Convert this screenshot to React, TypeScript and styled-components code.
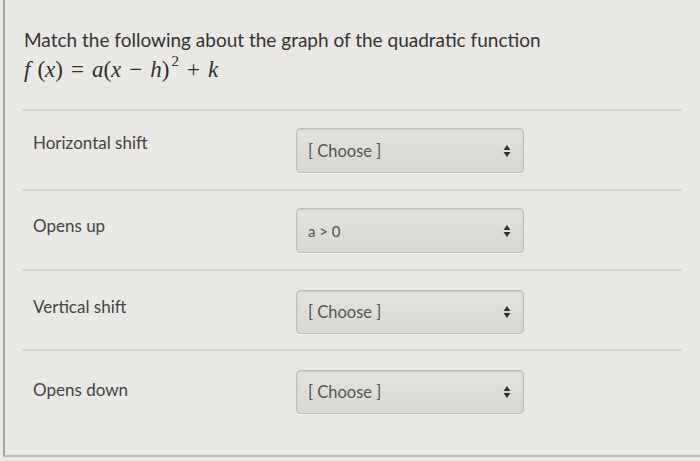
import styled, { createGlobalStyle } from "styled-components";

const GlobalStyle = createGlobalStyle`
  html, body {
    margin: 0;
    padding: 0;
    background: #e9e8e4;
  }
  body {
    font-family: Lato, "Open Sans", sans-serif;
    color: #3f3f3f;
  }
`;

const Page = styled.div`
  width: 697px;
  height: 457px;
  margin-left: 3px;
  border-left: 2px solid #a7a6a2;
  border-bottom: 2px solid #bdbcb8;
  box-sizing: border-box;
  overflow: hidden;
`;

const Header = styled.div`
  padding: 29px 0 0 2px;
  height: 111px;
  box-sizing: border-box;
  border-bottom: 2px solid #d6d5d1;
  margin: 0 18px 0 17px;
`;

const Title = styled.div`
  font-size: 19px;
  line-height: 22px;
  color: #333;
`;

const MathLine = styled.div`
  font-family: "Liberation Serif", "DejaVu Serif", serif;
  font-size: 23px;
  line-height: 26px;
  color: #2f2f2f;
  margin-top: 6px;
`;

const V = styled.i`
  font-style: italic;
`;

const Gap = styled.span`
  margin-left: 7px;
`;

const Op = styled.span`
  margin: 0 8px;
`;

const Sup = styled.sup`
  font-size: 15px;
  vertical-align: 11px;
  line-height: 0;
  margin-left: 2px;
`;

const Row = styled.div<{ $last?: boolean }>`
  display: flex;
  align-items: flex-start;
  height: ${(p) => (p.$last ? "auto" : "80px")};
  margin: 0 18px 0 17px;
  border-bottom: ${(p) => (p.$last ? "none" : "2px solid #d6d5d1")};
  box-sizing: border-box;
`;

const Label = styled.div<{ $offset: number }>`
  width: 274px;
  box-sizing: border-box;
  padding: ${(p) => p.$offset}px 0 0 11px;
  font-size: 17px;
  line-height: 20px;
  color: #444;
`;

const Select = styled.div<{ $top: number; $h: number }>`
  margin-top: ${(p) => p.$top}px;
  width: 228px;
  height: ${(p) => p.$h}px;
  box-sizing: border-box;
  display: flex;
  align-items: center;
  justify-content: space-between;
  padding: 0 12px 0 11px;
  border: 1px solid #bdbcb8;
  border-radius: 4px;
  background: linear-gradient(#e3e2de, #d8d7d3);
  box-shadow: inset 0 1px 2px rgba(0, 0, 0, 0.1), 0 1px 0 rgba(255, 255, 255, 0.5);
  color: #555;
`;

const SelectText = styled.span<{ $small?: boolean }>`
  font-size: ${(p) => (p.$small ? "15px" : "16.5px")};
`;

const Arrows = () => (
  <svg width="8" height="14" viewBox="0 0 8 14">
    <path d="M4 1 L7.5 6 H0.5 Z" fill="#333" />
    <path d="M4 13 L7.5 8 H0.5 Z" fill="#333" />
  </svg>
);

const rows = [
  { label: "Horizontal shift", value: "[ Choose ]", labelTop: 22, selTop: 17, h: 45 },
  { label: "Opens up", value: "a > 0", labelTop: 25, selTop: 17, h: 45, small: true },
  { label: "Vertical shift", value: "[ Choose ]", labelTop: 26, selTop: 19, h: 44 },
  { label: "Opens down", value: "[ Choose ]", labelTop: 29, selTop: 19, h: 44 },
];

export default function App() {
  return (
    <>
      <GlobalStyle />
      <Page>
        <Header>
          <Title>Match the following about the graph of the quadratic function</Title>
          <MathLine>
            <V>f</V>
            <Gap>(</Gap>
            <V>x</V>)<Op>=</Op>
            <V>a</V>(<V>x</V>
            <Op>−</Op>
            <V>h</V>)<Sup>2</Sup>
            <Op>+</Op>
            <V>k</V>
          </MathLine>
        </Header>
        {rows.map((r, i) => (
          <Row key={r.label} $last={i === rows.length - 1}>
            <Label $offset={r.labelTop}>{r.label}</Label>
            <Select $top={r.selTop} $h={r.h}>
              <SelectText $small={r.small}>{r.value}</SelectText>
              <Arrows />
            </Select>
          </Row>
        ))}
      </Page>
    </>
  );
}
